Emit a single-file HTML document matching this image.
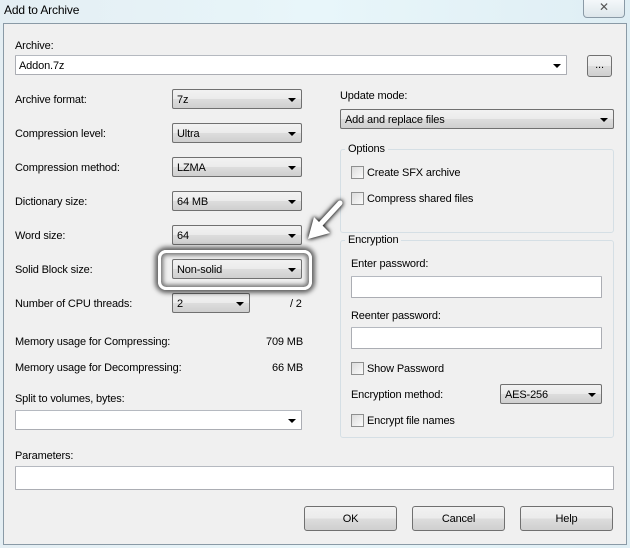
<!DOCTYPE html><html><head><style>
*{box-sizing:border-box}
body{margin:0;width:630px;height:548px;overflow:hidden;background:linear-gradient(90deg,#e4eef3,#e8f6fa 50%,#dfeef4);font-family:"Liberation Sans",sans-serif;font-size:11px;letter-spacing:-0.15px;color:#000;position:relative}
.a{position:absolute;white-space:nowrap}
.t{margin-top:1px}
.panel{position:absolute;left:3px;top:23px;width:624px;height:522px;background:#f0f0f0;border:1px solid #8a9aa6}
.cb{position:absolute;height:20px;border:1px solid #707070;border-radius:2px;background:linear-gradient(#f2f2f2,#ebebeb 50%,#dddddd 51%,#cfcfcf);padding:4px 0 0 4px}
.cb:after{content:"";position:absolute;right:5px;top:8px;border-left:4px solid transparent;border-right:4px solid transparent;border-top:4px solid #000}
.in{position:absolute;background:#fff;border:1px solid #abadb3;border-top-color:#b5b9c0;border-radius:1px;padding:4px 0 0 3px}
.in.dd:after{content:"";position:absolute;right:5px;top:8px;border-left:4px solid transparent;border-right:4px solid transparent;border-top:4px solid #000}
.btn{position:absolute;height:25px;border:1px solid #707070;border-radius:3px;background:linear-gradient(#f2f2f2,#ebebeb 50%,#dddddd 51%,#cfcfcf);text-align:center;padding-top:6px}
.grp{position:absolute;border:1px solid #d5dfe5;border-radius:3px}
.grp span{position:absolute;top:-7px;left:4px;background:#f0f0f0;padding:0 3px}
.chk{position:absolute;width:13px;height:13px;border:1px solid #8e8f8f;background:linear-gradient(135deg,#dcdcdc,#fbfbfb)}
</style></head><body>
<div class="a" style="left:4px;top:3px;font-size:12px">Add to Archive</div>
<div class="a" style="left:583px;top:0;width:42px;height:18px;border:1px solid #8a9aa6;border-top:none;border-radius:0 0 4px 4px;background:linear-gradient(#f4f8fa,#dde6eb);text-align:center;color:#555;font-size:12px">✕</div>
<div class="panel"></div>
<div class="a t" style="left:15px;top:39px">Archive:</div>
<div class="in dd" style="left:15px;top:55px;width:552px;height:20px">Addon.7z</div>
<div class="btn" style="left:587px;top:55px;width:25px;height:22px;padding-top:3px">...</div>

<div class="a t" style="left:15px;top:93px">Archive format:</div>
<div class="cb" style="left:172px;top:89px;width:130px">7z</div>
<div class="a t" style="left:15px;top:127px">Compression level:</div>
<div class="cb" style="left:172px;top:123px;width:130px">Ultra</div>
<div class="a t" style="left:15px;top:161px">Compression method:</div>
<div class="cb" style="left:172px;top:157px;width:130px">LZMA</div>
<div class="a t" style="left:15px;top:195px">Dictionary size:</div>
<div class="cb" style="left:172px;top:191px;width:130px">64 MB</div>
<div class="a t" style="left:15px;top:229px">Word size:</div>
<div class="cb" style="left:172px;top:225px;width:130px">64</div>
<div class="a t" style="left:15px;top:263px">Solid Block size:</div>
<div class="cb" style="left:172px;top:259px;width:130px">Non-solid</div>
<div class="a t" style="left:15px;top:297px">Number of CPU threads:</div>
<div class="cb" style="left:172px;top:293px;width:78px">2</div>
<div class="a t" style="left:290px;top:297px">/ 2</div>
<div class="a t" style="left:15px;top:335px">Memory usage for Compressing:</div>
<div class="a t" style="left:266px;top:335px">709 MB</div>
<div class="a t" style="left:15px;top:361px">Memory usage for Decompressing:</div>
<div class="a t" style="left:272px;top:361px">66 MB</div>
<div class="a t" style="left:15px;top:392px">Split to volumes, bytes:</div>
<div class="in dd" style="left:15px;top:410px;width:287px;height:20px"></div>
<div class="a t" style="left:15px;top:449px">Parameters:</div>
<div class="in" style="left:15px;top:466px;width:599px;height:24px"></div>

<div class="a t" style="left:340px;top:89px">Update mode:</div>
<div class="cb" style="left:340px;top:109px;width:274px">Add and replace files</div>
<div class="grp" style="left:340px;top:149px;width:274px;height:84px"><span>Options</span></div>
<div class="chk" style="left:351px;top:166px"></div><div class="a t" style="left:367px;top:166px">Create SFX archive</div>
<div class="chk" style="left:351px;top:192px"></div><div class="a t" style="left:367px;top:192px">Compress shared files</div>
<div class="grp" style="left:340px;top:240px;width:274px;height:198px"><span>Encryption</span></div>
<div class="a t" style="left:351px;top:257px">Enter password:</div>
<div class="in" style="left:351px;top:276px;width:251px;height:22px"></div>
<div class="a t" style="left:351px;top:309px">Reenter password:</div>
<div class="in" style="left:351px;top:327px;width:251px;height:22px"></div>
<div class="chk" style="left:351px;top:362px"></div><div class="a t" style="left:367px;top:362px">Show Password</div>
<div class="a t" style="left:351px;top:388px">Encryption method:</div>
<div class="cb" style="left:500px;top:384px;width:102px">AES-256</div>
<div class="chk" style="left:351px;top:414px"></div><div class="a t" style="left:367px;top:414px">Encrypt file names</div>

<div class="btn" style="left:304px;top:506px;width:93px">OK</div>
<div class="btn" style="left:412px;top:506px;width:93px">Cancel</div>
<div class="btn" style="left:520px;top:506px;width:93px">Help</div>

<div class="a" style="left:158px;top:250px;width:154px;height:40px;border:3px solid #fff;border-radius:8px;box-shadow:0 0 5px 3px rgba(0,0,0,.6),inset 0 0 5px 2px rgba(0,0,0,.55)"></div>
<svg class="a" style="left:300px;top:195px" width="50" height="55" viewBox="0 0 50 55">
<g style="filter:drop-shadow(0 0 2px rgba(0,0,0,.9)) drop-shadow(0 0 2px rgba(0,0,0,.6))">
<path d="M40 8 L16 34" stroke="#fff" stroke-width="5" stroke-linecap="round" fill="none"/>
<path d="M8 44 L14 22 L30 38 Z" fill="#fff"/>
</g></svg>
</body></html>
